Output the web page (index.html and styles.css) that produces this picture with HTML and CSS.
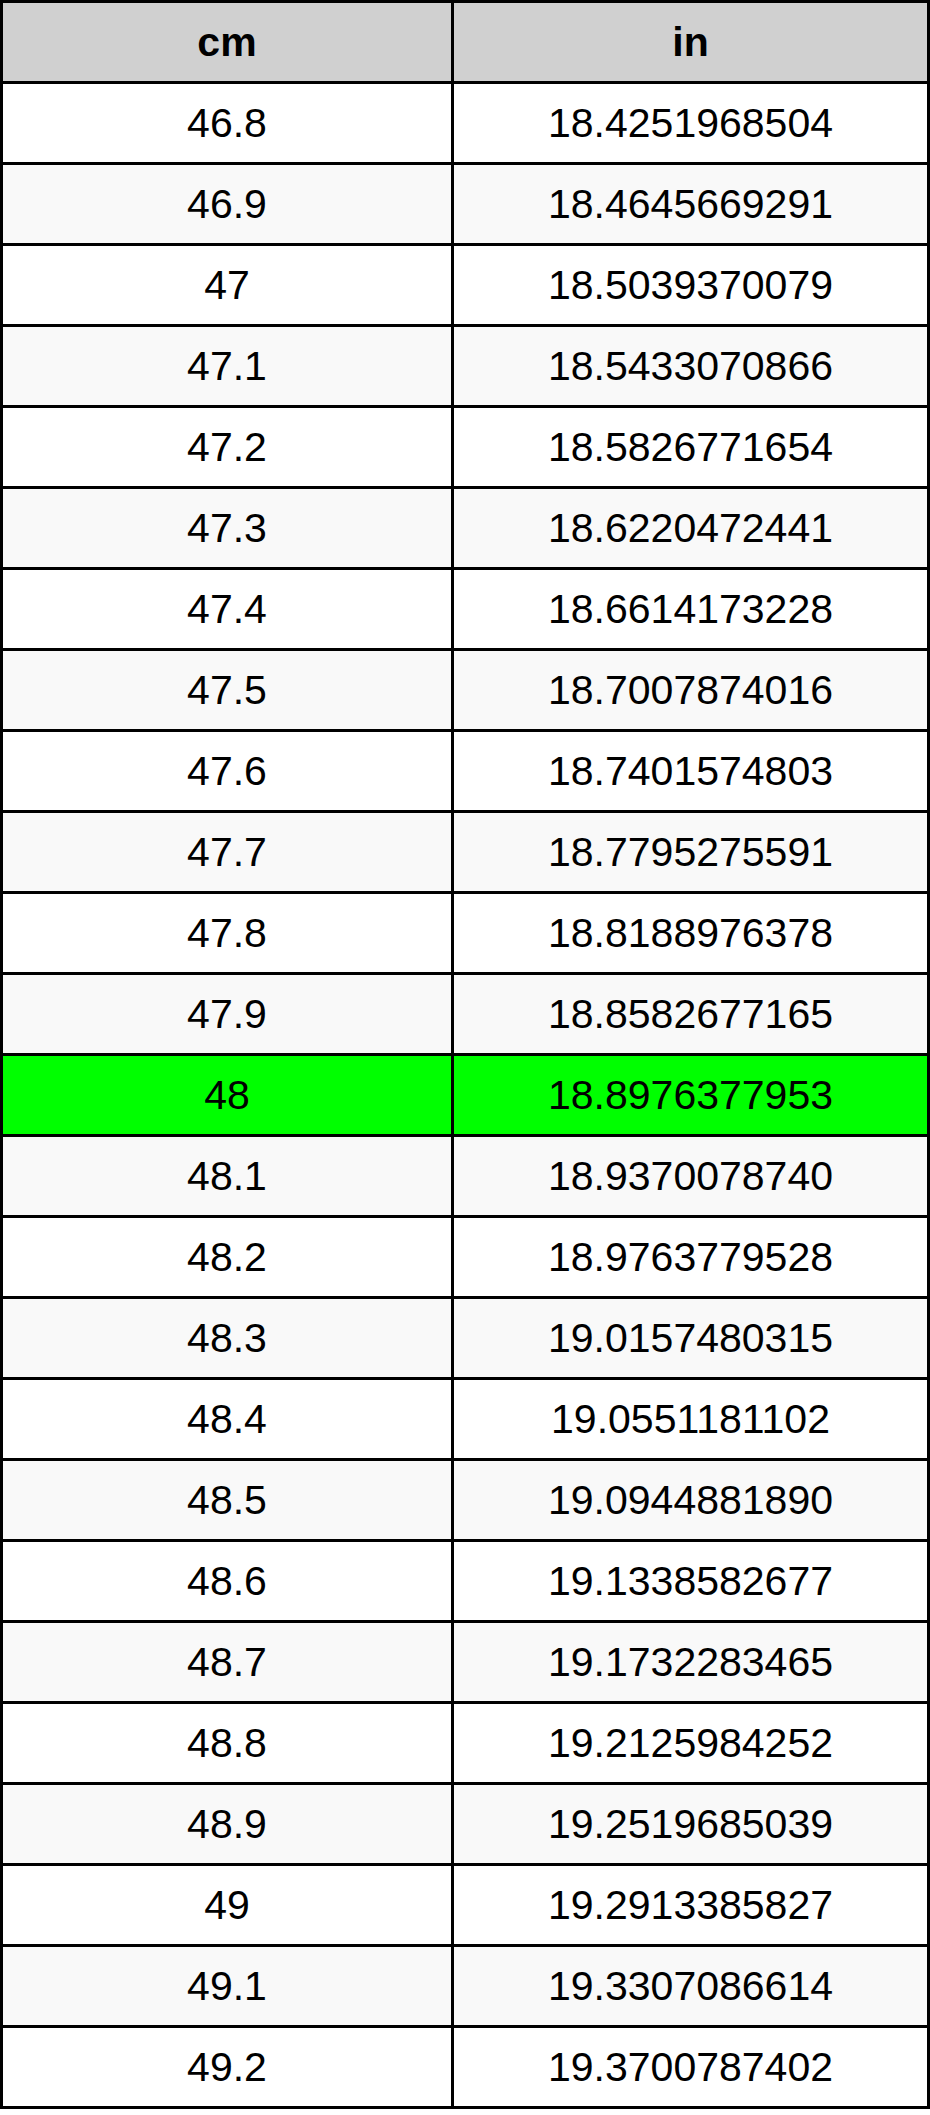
FILE: index.html
```html
<!DOCTYPE html>
<html>
<head>
<meta charset="utf-8">
<title>cm to in</title>
<link rel="stylesheet" href="styles.css">
</head>
<body>
<table class="conv">
<thead>
<tr><th class="c1">cm</th><th class="c2">in</th></tr>
</thead>
<tbody>
<tr><td class="c1">46.8</td><td class="c2">18.4251968504</td></tr>
<tr><td class="c1">46.9</td><td class="c2">18.4645669291</td></tr>
<tr><td class="c1">47</td><td class="c2">18.5039370079</td></tr>
<tr><td class="c1">47.1</td><td class="c2">18.5433070866</td></tr>
<tr><td class="c1">47.2</td><td class="c2">18.5826771654</td></tr>
<tr><td class="c1">47.3</td><td class="c2">18.6220472441</td></tr>
<tr><td class="c1">47.4</td><td class="c2">18.6614173228</td></tr>
<tr><td class="c1">47.5</td><td class="c2">18.7007874016</td></tr>
<tr><td class="c1">47.6</td><td class="c2">18.7401574803</td></tr>
<tr><td class="c1">47.7</td><td class="c2">18.7795275591</td></tr>
<tr><td class="c1">47.8</td><td class="c2">18.8188976378</td></tr>
<tr><td class="c1">47.9</td><td class="c2">18.8582677165</td></tr>
<tr class="hl"><td class="c1">48</td><td class="c2">18.8976377953</td></tr>
<tr><td class="c1">48.1</td><td class="c2">18.9370078740</td></tr>
<tr><td class="c1">48.2</td><td class="c2">18.9763779528</td></tr>
<tr><td class="c1">48.3</td><td class="c2">19.0157480315</td></tr>
<tr><td class="c1">48.4</td><td class="c2">19.0551181102</td></tr>
<tr><td class="c1">48.5</td><td class="c2">19.0944881890</td></tr>
<tr><td class="c1">48.6</td><td class="c2">19.1338582677</td></tr>
<tr><td class="c1">48.7</td><td class="c2">19.1732283465</td></tr>
<tr><td class="c1">48.8</td><td class="c2">19.2125984252</td></tr>
<tr><td class="c1">48.9</td><td class="c2">19.2519685039</td></tr>
<tr><td class="c1">49</td><td class="c2">19.2913385827</td></tr>
<tr><td class="c1">49.1</td><td class="c2">19.3307086614</td></tr>
<tr><td class="c1">49.2</td><td class="c2">19.3700787402</td></tr>
</tbody>
</table>
</body>
</html>
```
FILE: styles.css
```css
html, body {
  margin: 0;
  padding: 0;
  background: #ffffff;
}
.conv {
  border-collapse: separate;
  border-spacing: 0;
  table-layout: fixed;
  width: 930px;
  border-left: 3px solid #000;
  border-top: 3px solid #000;
  font-family: "Liberation Sans", Arial, sans-serif;
  font-size: 41px;
  color: #000;
}
.conv th, .conv td {
  height: 78px;
  padding: 0;
  text-align: center;
  vertical-align: middle;
  border-right: 3px solid #000;
  border-bottom: 3px solid #000;
  box-sizing: content-box;
  line-height: normal;
}
.conv th {
  background: #d0d0d0;
  font-weight: bold;
}
.conv .c1 { width: 448px; }
.conv .c2 { width: 473px; }
.conv tbody tr:nth-child(odd) td { background: #ffffff; }
.conv tbody tr:nth-child(even) td { background: #f9f9f9; }
.conv tbody tr.hl td { background: #00ff00; }
```
